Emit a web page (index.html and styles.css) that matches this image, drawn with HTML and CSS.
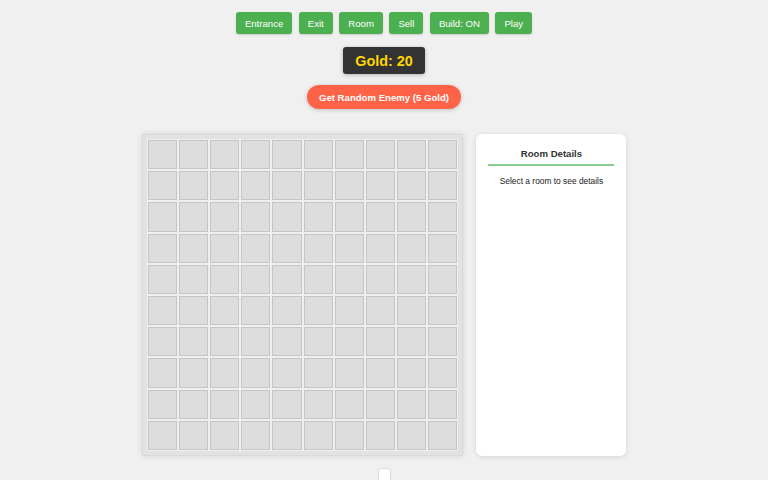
FILE: index.html
```html
<!DOCTYPE html>
<html>
<head>
<meta charset="utf-8">
<link rel="stylesheet" href="styles.css">
</head>
<body>
<div class="controls">
  <button class="btn">Entrance</button>
  <button class="btn">Exit</button>
  <button class="btn">Room</button>
  <button class="btn">Sell</button>
  <button class="btn">Build: ON</button>
  <button class="btn">Play</button>
</div>
<div class="gold-row"><div class="gold">Gold: 20</div></div>
<div class="enemy-row"><button class="enemy-btn">Get Random Enemy (5 Gold)</button></div>
<div class="main">
  <div class="grid" id="grid"></div>
  <div class="panel">
    <div class="panel-title">Room Details</div>
    <div class="panel-text">Select a room to see details</div>
  </div>
</div>
<div class="bottom-row"><div class="bottom-box"></div></div>
<script>
  var g = document.getElementById('grid');
  for (var i = 0; i < 100; i++) {
    var c = document.createElement('div');
    c.className = 'cell';
    g.appendChild(c);
  }
</script>
</body>
</html>
```
FILE: styles.css
```css
html, body {
  margin: 0;
  background: #f0f0f0;
  font-family: "Liberation Sans", Arial, sans-serif;
  overflow: hidden;
}
body {
  padding: 12px 0 0;
  height: 480px;
  box-sizing: border-box;
}
.controls {
  display: flex;
  justify-content: center;
  gap: 6.5px;
}
.btn {
  height: 22px;
  padding: 0 9px;
  border: none;
  border-radius: 3px;
  background: #4caf50;
  color: #fff;
  font-family: "Liberation Sans", Arial, sans-serif;
  font-size: 9.6px;
  box-shadow: 0 1px 2px rgba(0,0,0,0.15);
}
.gold-row {
  display: flex;
  justify-content: center;
  margin-top: 13px;
}
.gold {
  height: 27px;
  box-sizing: border-box;
  padding: 0 12px;
  display: flex;
  align-items: center;
  background: #333;
  color: #ffd700;
  font-weight: bold;
  font-size: 14.4px;
  border-radius: 3px;
  box-shadow: 0 1px 4px rgba(0,0,0,0.25);
}
.enemy-row {
  display: flex;
  justify-content: center;
  margin-top: 11px;
}
.enemy-btn {
  height: 24px;
  padding: 0 11.5px;
  border: none;
  border-radius: 12px;
  background: #ff6347;
  color: #fff;
  font-family: "Liberation Sans", Arial, sans-serif;
  font-weight: bold;
  font-size: 9.6px;
  box-shadow: 0 1px 4px rgba(0,0,0,0.2);
}
.main {
  display: flex;
  justify-content: center;
  gap: 13px;
  margin-top: 25px;
}
.grid {
  display: grid;
  grid-template-columns: repeat(10, 29.2px);
  grid-template-rows: repeat(10, 29.2px);
  gap: 2px;
  padding: 5px;
  background: #e2e2e2;
  border: 1px solid #dadada;
  box-shadow: 0 0 6px rgba(0,0,0,0.12);
}
.cell {
  background: #dddddd;
  border: 1px solid #c6c6c6;
  box-sizing: border-box;
  box-shadow: 0 0 0 1px rgba(255,255,255,0.45);
}
.panel {
  width: 150px;
  box-sizing: border-box;
  padding: 14px 12px;
  background: #fff;
  border-radius: 6px;
  box-shadow: 0 1px 5px rgba(0,0,0,0.12);
}
.panel-title {
  text-align: center;
  font-weight: bold;
  font-size: 9.6px;
  color: #333;
  padding-bottom: 5px;
  border-bottom: 2px solid #8dcb8f;
}
.panel-text {
  text-align: center;
  font-size: 8.4px;
  color: #222;
  margin-top: 10px;
}
.bottom-row {
  display: flex;
  justify-content: center;
  margin-top: 12px;
}
.bottom-box {
  width: 13px;
  height: 20px;
  box-sizing: border-box;
  background: #fff;
  border: 1px solid #dcdcdc;
  border-radius: 3px;
}
```
